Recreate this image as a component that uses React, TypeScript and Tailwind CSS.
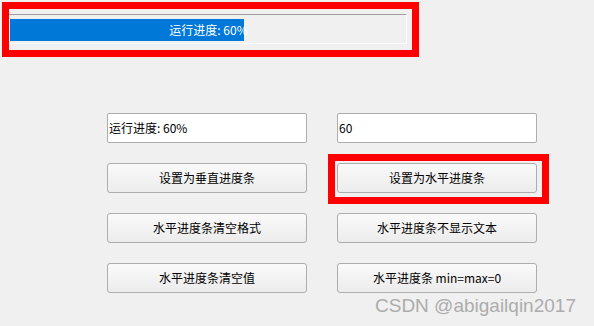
import React from 'react';

const font = "font-['Microsoft_YaHei','Noto_Sans_CJK_SC',sans-serif]";

function LineEdit({ value }: { value: string }) {
  return (
    <div className="h-[30px] bg-white border border-[#adadad] rounded-[2px] flex items-center pl-[1px] text-[12px] text-black">
      {value}
    </div>
  );
}

function PushButton({ label }: { label: string }) {
  return (
    <button className="h-[30px] border border-[#adadad] rounded-[3px] bg-gradient-to-b from-[#fafafa] to-[#ececec] text-[12px] text-black flex items-center justify-center">
      {label}
    </button>
  );
}

export default function App() {
  return (
    <div className={`relative w-[594px] h-[326px] overflow-hidden bg-[#f0f0f0] ${font}`}>
      <div className="pt-[14px] pl-[9px]">
        {/* horizontal progress bar */}
        <div className="relative w-[398px] h-[30px] border-t border-[#a0a0a0] border-b border-r border-b-white border-r-white">
          <div className="absolute left-[1px] top-[4px] w-[234px] h-[22px] bg-[#0078d7]" />
          <div className="absolute inset-0 flex items-center justify-center pt-[2px] pl-[2px] text-[12px] text-white">
            运行进度: 60%
          </div>
        </div>
      </div>

      <div className="mt-[69px] ml-[107px] grid grid-cols-[200px_200px] gap-x-[30px] gap-y-[20px]">
        <LineEdit value="运行进度: 60%" />
        <LineEdit value="60" />
        <PushButton label="设置为垂直进度条" />
        <PushButton label="设置为水平进度条" />
        <PushButton label="水平进度条清空格式" />
        <PushButton label="水平进度条不显示文本" />
        <PushButton label="水平进度条清空值" />
        <PushButton label="水平进度条 min=max=0" />
      </div>

      {/* annotation boxes */}
      <div className="absolute left-[2px] top-[2px] w-[417px] h-[55px] border-[7px] border-[#ff0000]" />
      <div className="absolute left-[328px] top-[154px] w-[221px] h-[50px] border-[7px] border-[#ff0000]" />

      <div className="absolute left-[375px] top-[294px] text-[19px] leading-[24px] text-[#acacac] font-['Liberation_Sans',sans-serif]">
        CSDN @abigailqin2017
      </div>
    </div>
  );
}
